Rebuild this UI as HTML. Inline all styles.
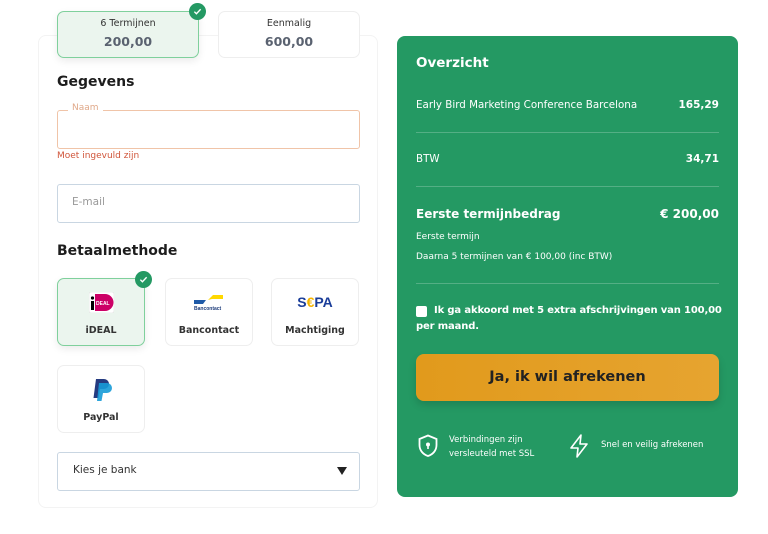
<!DOCTYPE html>
<html><head><meta charset="utf-8"><style>
*{box-sizing:border-box;margin:0;padding:0}
body{width:768px;height:534px;background:#fff;font-family:"DejaVu Sans","Liberation Sans",sans-serif;position:relative;overflow:hidden;color:#222}
.a{position:absolute}
.card{left:38px;top:35px;width:340px;height:473px;border:1px solid #f3f3f3;border-radius:8px;background:#fff}
.tab{top:11px;width:142px;height:47px;border-radius:7px;border:1px solid #eee;background:#fff;text-align:center}
.tab .t{font-size:9.5px;color:#333;margin-top:6px}
.tab .v{font-size:12.5px;font-weight:bold;color:#5a6270;margin-top:5px}
.pay{width:88px;height:68px;border:1px solid #eee;border-radius:7px;background:#fff;text-align:center;font-size:9.5px;font-weight:bold;color:#333}
.pay .lb{position:absolute;left:0;right:0;top:46px}
.sel{background:#ebf5ee;border:1px solid #7fd09c;box-shadow:0 3px 8px rgba(0,0,0,.08)}
.chk{width:17px;height:17px;border-radius:50%;background:#249963;display:flex;align-items:center;justify-content:center}
h2{font-size:14px;font-weight:bold;color:#1d1d1d}
.inp{left:57px;width:303px;height:39px;border:1px solid #c9d6e2;border-radius:3px}
.g{left:397px;top:36px;width:341px;height:461px;background:#249963;border-radius:8px;color:#fff}
.hr{left:19px;width:303px;height:1px;background:rgba(255,255,255,.22)}
</style></head><body>
<div class="a card"></div>
<div class="a tab sel" style="left:57px"><div class="t">6 Termijnen</div><div class="v">200,00</div></div>
<div class="a chk" style="left:189px;top:3px"><svg width="9" height="9" viewBox="0 0 10 10"><path d="M1.5 5.2l2.3 2.3 4.7-5" stroke="#fff" stroke-width="1.5" fill="none"/></svg></div>
<div class="a tab" style="left:218px"><div class="t">Eenmalig</div><div class="v">600,00</div></div>
<h2 class="a" style="left:57px;top:74px">Gegevens</h2>
<div class="a inp" style="top:110px;border-color:#f0c4a8"></div>
<div class="a" style="left:68px;top:103px;background:#fff;padding:0 4px;font-size:9px;color:#e0a98a">Naam</div>
<div class="a" style="left:57px;top:151px;font-size:9px;color:#d0553a">Moet ingevuld zijn</div>
<div class="a inp" style="top:184px"></div>
<div class="a" style="left:72px;top:196px;font-size:10.5px;color:#999">E-mail</div>
<h2 class="a" style="left:57px;top:243px">Betaalmethode</h2>
<div class="a pay sel" style="left:57px;top:278px"><svg class="a" style="left:31px;top:13px" width="25" height="21" viewBox="0 0 25 21"><rect x="0" y="0" width="25" height="21" rx="2" fill="#fff" stroke="#ddd" stroke-width=".5"/><path d="M6 2h10a7 7 0 010 17H6z" fill="#cc0066"/><rect x="2" y="9" width="3" height="9" fill="#000"/><circle cx="3.5" cy="6" r="1.6" fill="#000"/><text x="7" y="13" font-size="5" fill="#fff" font-family="Liberation Sans">DEAL</text></svg><div class="lb">iDEAL</div></div>
<div class="a chk" style="left:135px;top:271px"><svg width="9" height="9" viewBox="0 0 10 10"><path d="M1.5 5.2l2.3 2.3 4.7-5" stroke="#fff" stroke-width="1.5" fill="none"/></svg></div>
<div class="a pay" style="left:165px;top:278px"><svg class="a" style="left:28px;top:15px" width="30" height="18" viewBox="0 0 30 18"><path d="M0 6h12l-3 4H0z" fill="#1e5aa8"/><path d="M14 6l5-5h10v4H18z" fill="#ffd800"/><text x="0" y="16" font-size="5" fill="#1e3d7a" font-family="Liberation Sans" font-weight="bold">Bancontact</text></svg><div class="lb">Bancontact</div></div>
<div class="a pay" style="left:271px;top:278px"><div class="a" style="left:0;right:0;top:15px;font-size:14px;font-weight:900;color:#1a3d99;font-family:'Liberation Sans',sans-serif">S<span style="color:#f4b400">€</span>PA</div><div class="lb">Machtiging</div></div>
<div class="a pay" style="left:57px;top:365px"><svg class="a" style="left:34px;top:12px" width="20" height="24" viewBox="0 0 20 24"><path d="M4 1h8a5 5 0 010 10H8l-1.5 9H1.5z" fill="#253b80"/><path d="M7 5h8a5 5 0 010 10h-4l-1.5 8H5z" fill="#179bd7" opacity=".9"/></svg><div class="lb">PayPal</div></div>
<div class="a inp" style="top:452px"></div>
<div class="a" style="left:73px;top:464px;font-size:10.5px;color:#333">Kies je bank</div>
<svg class="a" style="left:337px;top:467px" width="10" height="8"><path d="M0 0h10L5 8z" fill="#222"/></svg>

<div class="a g">
<div class="a" style="left:19px;top:19px;font-size:13.5px;font-weight:bold">Overzicht</div>
<div class="a" style="left:19px;top:63px;font-size:10.3px">Early Bird Marketing Conference Barcelona</div>
<div class="a" style="right:19px;top:63px;font-size:10.5px;font-weight:bold">165,29</div>
<div class="a hr" style="top:96px"></div>
<div class="a" style="left:19px;top:117px;font-size:10.3px">BTW</div>
<div class="a" style="right:19px;top:117px;font-size:10.5px;font-weight:bold">34,71</div>
<div class="a hr" style="top:150px"></div>
<div class="a" style="left:19px;top:171px;font-size:12px;font-weight:bold">Eerste termijnbedrag</div>
<div class="a" style="right:19px;top:171px;font-size:12px;font-weight:bold">€ 200,00</div>
<div class="a" style="left:19px;top:196px;font-size:9px">Eerste termijn</div>
<div class="a" style="left:19px;top:216px;font-size:9px">Daarna 5 termijnen van € 100,00 (inc BTW)</div>
<div class="a hr" style="top:247px"></div>
<div class="a" style="left:19px;top:270px;width:11px;height:11px;background:#fff;border-radius:2px"></div>
<div class="a" style="left:19px;top:267px;width:310px;font-size:10px;line-height:16px;font-weight:bold;text-indent:18px;letter-spacing:-0.15px">Ik ga akkoord met 5 extra afschrijvingen van 100,00 per maand.</div>
<div class="a" style="left:19px;top:318px;width:303px;height:47px;border-radius:8px;background:linear-gradient(90deg,#e19a1c,#e6a430);box-shadow:0 4px 8px rgba(0,0,0,.15);text-align:center;line-height:47px;font-size:14.5px;font-weight:bold;color:#222">Ja, ik wil afrekenen</div>
<svg class="a" style="left:20px;top:398px" width="22" height="24" viewBox="0 0 22 24"><path d="M11 1.5L2.5 5v6c0 5.5 3.7 9.5 8.5 11 4.8-1.5 8.5-5.5 8.5-11V5z" fill="none" stroke="#fff" stroke-width="1.8"/><circle cx="11" cy="10.5" r="2" fill="#fff"/><rect x="10.2" y="11" width="1.6" height="4" fill="#fff"/></svg>
<div class="a" style="left:52px;top:397px;font-size:8.5px;line-height:14px">Verbindingen zijn<br>versleuteld met SSL</div>
<svg class="a" style="left:172px;top:398px" width="20" height="24" viewBox="0 0 20 24"><path d="M12 1L2 14h7l-1 9 10-13h-7z" fill="none" stroke="#fff" stroke-width="1.6" stroke-linejoin="round"/></svg>
<div class="a" style="left:204px;top:404px;font-size:8.5px">Snel en veilig afrekenen</div>
</div>
</body></html>
